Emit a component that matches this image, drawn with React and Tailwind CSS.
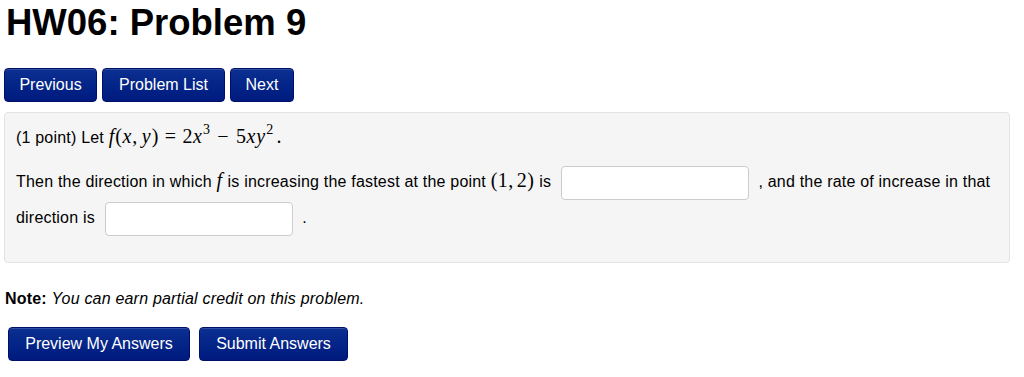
import React from "react";

const btn =
  "h-[34px] rounded-[4px] border border-[#001066] bg-gradient-to-b from-[#0c2f92] to-[#001a7e] text-white text-[16px] leading-[20px] shadow-[inset_0_1px_0_rgba(255,255,255,0.15)]";

const serif = { fontFamily: '"Liberation Serif", "DejaVu Serif", serif' };

function M({ children, className = "" }) {
  return (
    <span className={`italic text-[20px] leading-none tracking-[1px] ${className}`} style={serif}>
      {children}
    </span>
  );
}
function R({ children, className = "" }) {
  return (
    <span className={`not-italic text-[20px] leading-none tracking-[0.5px] ${className}`} style={serif}>
      {children}
    </span>
  );
}
function Sup({ children }) {
  return (
    <sup className="text-[14px] not-italic -top-[0.65em]" style={serif}>
      {children}
    </sup>
  );
}

const inputCls =
  "inline-block align-middle w-[188px] h-[34px] mx-[5px] rounded-[4px] border border-[#cccccc] bg-white";

export default function App() {
  return (
    <div
      className="w-[1024px] h-[377px] bg-white text-black px-[4px] overflow-hidden"
      style={{ fontFamily: '"Liberation Sans", Arial, sans-serif' }}
    >
      <h1 className="text-[36.5px] font-bold leading-[46px] pl-[2px]">HW06: Problem 9</h1>
      <div className="flex gap-[5px] mt-[22px]">
        <button className={`${btn} w-[93px]`}>Previous</button>
        <button className={`${btn} w-[123px]`}>Problem List</button>
        <button className={`${btn} w-[64px]`}>Next</button>
      </div>
      <div className="mt-[10px] w-[1006px] h-[151px] rounded-[4px] border border-[#e3e3e3] bg-[#f5f5f5] px-[11px] pt-[13px] text-[16px] tracking-[0.2px]">
        <p className="leading-[24px]">
          (1 point) Let <M>f</M>
          <R>(</R>
          <M>x</M>
          <R className="mr-[4px]">,</R>
          <M>y</M>
          <R>)</R>
          <R className="mx-[6px]">=</R>
          <R>2</R>
          <M>x</M>
          <Sup>3</Sup>
          <R className="mx-[7px]">&minus;</R>
          <R>5</R>
          <M>xy</M>
          <Sup>2</Sup>
          <R className="ml-[3px]">.</R>
        </p>
        <p className="leading-[35px] mt-[14px]">
          Then the direction in which <M>f</M> is increasing the fastest at the point{" "}
          <R>(1,</R>
          <R className="ml-[3px]">2)</R> is{" "}
          <input className={inputCls} type="text" /> , and the rate of increase in that direction is{" "}
          <input className={inputCls} type="text" /> .
        </p>
      </div>
      <p className="text-[16px] tracking-[0.2px] mt-[26px] leading-[20px] pl-[1px]">
        <span className="font-bold">Note:</span> <i>You can earn partial credit on this problem.</i>
      </p>
      <div className="flex gap-[9px] mt-[18px] pl-[4px]">
        <button className={`${btn} w-[182px]`}>Preview My Answers</button>
        <button className={`${btn} w-[149px]`}>Submit Answers</button>
      </div>
    </div>
  );
}
